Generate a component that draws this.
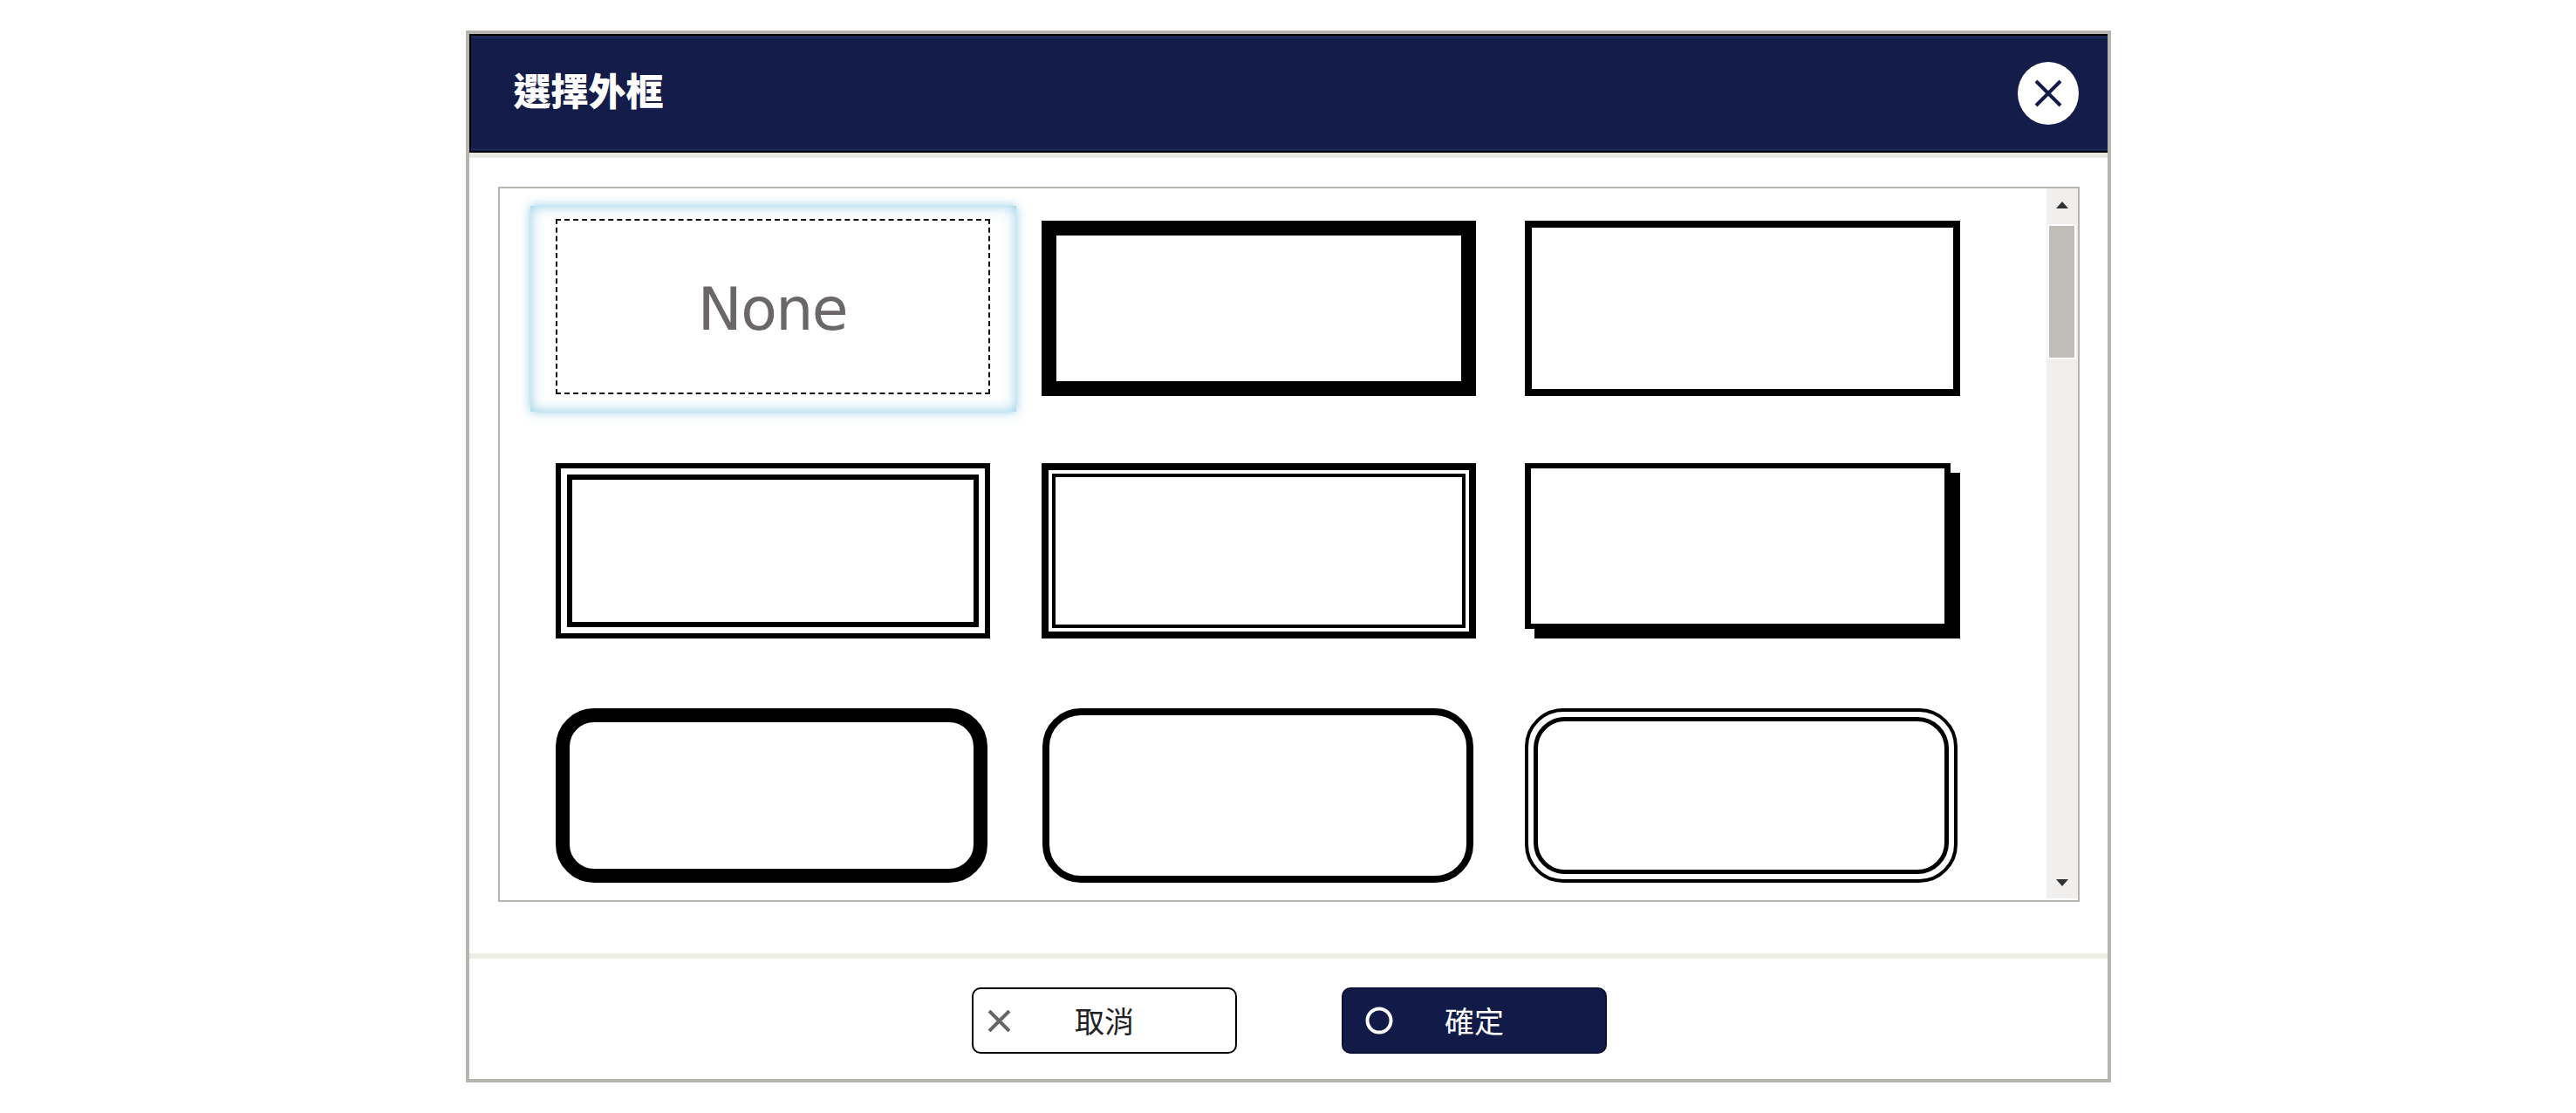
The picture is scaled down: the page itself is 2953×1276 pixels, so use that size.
<script>
  // frame picker dialog, first item is selected
  let selected = 'none';
</script>

<div class="dialog">
  <header class="head">
    <h1>選擇外框</h1>
    <button class="close" aria-label="close">
      <svg viewBox="0 0 32 32" width="32" height="32">
        <path d="M2 2 L30 30 M30 2 L2 30" stroke="#141d49" stroke-width="4" fill="none" />
      </svg>
    </button>
  </header>

  <section class="content">
    <div class="panel">
      <div class="list">
        <div class="tile none" class:selected={selected === 'none'}>None</div>
        <div class="tile thick"></div>
        <div class="tile medium"></div>

        <div class="tile double-a"><div class="inner"></div></div>
        <div class="tile double-b"><div class="inner"></div></div>
        <div class="tile shadow"></div>

        <div class="tile round-thick"></div>
        <div class="tile round-thin"></div>
        <div class="tile round-double"><div class="inner"></div></div>
      </div>
      <div class="scrollbar">
        <span class="arrow up"></span>
        <span class="thumb"></span>
        <span class="arrow down"></span>
      </div>
    </div>
  </section>

  <footer class="foot">
    <button class="btn cancel">
      <svg viewBox="0 0 27 25" width="27" height="25">
        <path d="M2 1 L25 24 M25 1 L2 24" stroke="#666" stroke-width="4" fill="none" />
      </svg>
      <span>取消</span>
    </button>
    <button class="btn ok">
      <svg viewBox="0 0 32 32" width="32" height="32">
        <circle cx="16" cy="16" r="13.5" stroke="#fff" stroke-width="4" fill="none" />
      </svg>
      <span>確定</span>
    </button>
  </footer>
</div>

<style>
  :global(body) {
    background: #fff;
    font-family: "Noto Sans CJK TC", sans-serif;
  }

  .dialog {
    box-sizing: border-box;
    width: 1886px;
    height: 1206px;
    margin: 35px auto 0;
    border: 4px solid #b8b5b0;
    display: flex;
    flex-direction: column;
    background: #fff;
  }

  .head {
    box-sizing: border-box;
    height: 136px;
    display: flex;
    align-items: center;
    justify-content: space-between;
    padding: 0 33px 0 49px;
    background: #141d49;
    border: solid #000;
    border-width: 2px 0 2px 2px;
    box-shadow: inset 0 3px 0 #1d2757, inset 0 -3px 0 #1d2757;
  }

  h1 {
    margin: 0 0 8px;
    font-size: 43px;
    line-height: 1.2;
    font-weight: 900;
    color: #fff;
  }

  .close {
    width: 70px;
    height: 72px;
    padding: 0;
    border: none;
    border-radius: 50%;
    background: #fff;
    display: flex;
    align-items: center;
    justify-content: center;
  }

  .content {
    flex: 1;
    border-top: 6px solid #e9e8e3;
    border-bottom: 6px solid #ecebe6;
    padding: 33px 32px 0 33px;
  }

  .panel {
    box-sizing: border-box;
    height: 820px;
    border: 2px solid #b8b5b0;
    display: flex;
    overflow: hidden;
  }

  .list {
    flex: 1;
    display: grid;
    grid-template-columns: 557px 554px 500px;
    grid-auto-rows: min-content;
    row-gap: 77px;
    align-items: start;
    padding: 37px 0 0 64px;
  }

  .tile {
    box-sizing: border-box;
    height: 201px;
    width: 498px;
    border: 0 solid #000;
    display: flex;
  }

  .inner {
    flex: 1;
    border: 0 solid #000;
  }

  .none {
    position: relative;
    margin-top: -2px;
    padding-top: 5px;
    border: 2px dashed #111;
    align-items: center;
    justify-content: center;
    font-family: "DejaVu Sans", sans-serif;
    font-size: 68px;
    letter-spacing: -1.5px;
    color: #6b666a;
  }

  .selected::before {
    content: "";
    position: absolute;
    inset: -17px -32px -22px -31px;
    box-shadow: 0 0 11px rgba(125, 195, 225, 0.85), inset 0 0 15px rgba(125, 195, 225, 0.85);
  }

  .thick {
    border-width: 17px;
  }

  .medium {
    width: 499px;
    border-width: 8px;
  }

  .double-a {
    border-width: 6px;
    padding: 7px;
  }

  .double-a .inner {
    border-width: 6px;
  }

  .double-b {
    border-width: 8px;
    padding: 4px;
  }

  .double-b .inner {
    border-width: 4px;
  }

  .shadow {
    width: 488px;
    height: 190px;
    border-width: 6px 7px;
    box-shadow: 11px 11px 0 #000;
  }

  .round-thick {
    width: 495px;
    height: 200px;
    margin-top: 3px;
    border-width: 16px;
    border-radius: 44px;
  }

  .round-thin {
    width: 494px;
    height: 200px;
    margin: 3px 0 0 1px;
    border-width: 8px;
    border-radius: 44px;
  }

  .round-double {
    width: 496px;
    height: 200px;
    margin-top: 3px;
    border-width: 4px;
    padding: 6px;
    border-radius: 44px;
  }

  .round-double .inner {
    border-width: 5px;
    border-radius: 36px;
  }

  .scrollbar {
    box-sizing: border-box;
    width: 36px;
    height: 814px;
    background: #f0efed;
    display: flex;
    flex-direction: column;
    align-items: center;
    padding: 15px 0 14px;
  }

  .arrow {
    width: 0;
    height: 0;
    border-left: 7px solid transparent;
    border-right: 7px solid transparent;
  }

  .up {
    border-bottom: 8px solid #333;
  }

  .down {
    margin-top: auto;
    border-top: 8px solid #333;
  }

  .thumb {
    width: 29px;
    height: 151px;
    margin-top: 20px;
    background: #c0bdb8;
    outline: 2px solid #fff;
  }

  .foot {
    flex: none;
    display: flex;
    justify-content: center;
    gap: 120px;
    padding: 33px 0 29px 3px;
  }

  .btn {
    box-sizing: border-box;
    width: 304px;
    height: 76px;
    padding: 0 16px;
    border: 2px solid #000;
    border-radius: 10px;
    display: grid;
    grid-template-columns: 1fr auto 1fr;
    align-items: center;
    font-family: "Noto Sans CJK TC", sans-serif;
    font-size: 34px;
    line-height: 1;
  }

  .btn svg {
    justify-self: start;
  }

  .cancel {
    background: #fff;
    color: #222;
  }

  .ok {
    padding-left: 25px;
    padding-right: 25px;
    background: #121a47;
    border-color: #0a1033;
    color: #fff;
  }
</style>
